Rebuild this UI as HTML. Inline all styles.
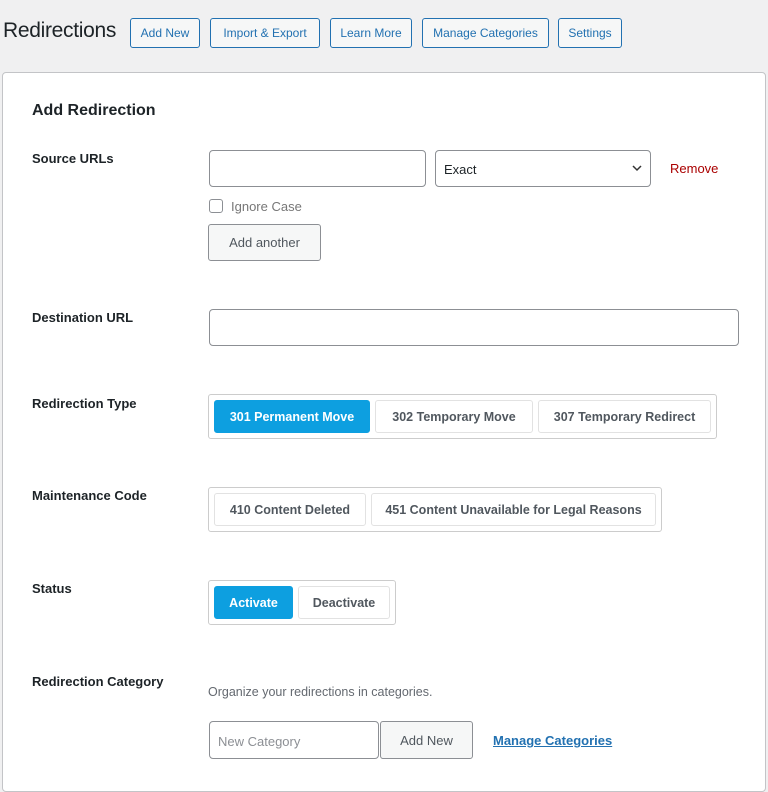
<!DOCTYPE html><html><head><style>
body{margin:0;width:768px;height:774px;background:#f0f0f1;font-family:"Liberation Sans",sans-serif;position:relative;overflow:hidden;color:#1d2327}
.a{position:absolute;box-sizing:border-box}
.hb{border:1px solid #2271b1;border-radius:3px;color:#2271b1;font-size:12px;display:flex;align-items:center;justify-content:center;background:#f6f7f7;top:18px;height:30px}
.lb{font-size:13px;font-weight:bold;left:32px}
.in{border:1px solid #8c8f94;border-radius:4px;background:#fff}
.grp{border:1px solid #ccc;border-radius:3px;background:#fff}
.bt{border:1px solid #e2e2e2;border-radius:3px;font-size:12.5px;font-weight:bold;color:#50575e;display:flex;align-items:center;justify-content:center;background:#fff}
.on{background:#0d9fe0;border-color:#0d9fe0;color:#fff}
</style></head><body>
<div class="a" style="left:3px;top:19px;font-size:21px;letter-spacing:-0.3px;color:#1d2327">Redirections</div>
<div class="a hb" style="left:130px;width:70px">Add New</div>
<div class="a hb" style="left:210px;width:110px">Import &amp; Export</div>
<div class="a hb" style="left:330px;width:82px">Learn More</div>
<div class="a hb" style="left:422px;width:127px">Manage Categories</div>
<div class="a hb" style="left:558px;width:64px">Settings</div>
<div class="a" style="left:2px;top:72px;width:764px;height:720px;background:#fff;border:1px solid #c3c4c7;border-radius:4px"></div>
<div class="a" style="left:32px;top:102px;font-size:16px;font-weight:bold">Add Redirection</div>
<div class="a lb" style="top:151px">Source URLs</div>
<div class="a in" style="left:209px;top:150px;width:217px;height:37px"></div>
<div class="a in" style="left:435px;top:150px;width:216px;height:37px;font-size:13px;padding:11px 8px">Exact
<svg style="position:absolute;right:8px;top:14px" width="10" height="7"><path d="M1 1l4 4 4-4" stroke="#333" stroke-width="1.5" fill="none"/></svg></div>
<div class="a" style="left:670px;top:161px;font-size:13px;color:#a00">Remove</div>
<div class="a" style="left:209px;top:199px;width:14px;height:14px;border:1px solid #8c8f94;border-radius:3px"></div>
<div class="a" style="left:231px;top:199px;font-size:13px;color:#777">Ignore Case</div>
<div class="a" style="left:208px;top:224px;width:113px;height:37px;border:1px solid #8c8f94;border-radius:3px;background:#f6f7f7;font-size:13px;color:#50575e;display:flex;align-items:center;justify-content:center">Add another</div>
<div class="a lb" style="top:310px">Destination URL</div>
<div class="a in" style="left:209px;top:309px;width:530px;height:37px"></div>
<div class="a lb" style="top:396px">Redirection Type</div>
<div class="a grp" style="left:208px;top:394px;width:509px;height:45px"></div>
<div class="a bt on" style="left:214px;top:400px;width:156px;height:33px">301 Permanent Move</div>
<div class="a bt" style="left:375px;top:400px;width:158px;height:33px">302 Temporary Move</div>
<div class="a bt" style="left:538px;top:400px;width:173px;height:33px">307 Temporary Redirect</div>
<div class="a lb" style="top:488px">Maintenance Code</div>
<div class="a grp" style="left:208px;top:487px;width:454px;height:45px"></div>
<div class="a bt" style="left:214px;top:493px;width:152px;height:33px">410 Content Deleted</div>
<div class="a bt" style="left:371px;top:493px;width:285px;height:33px">451 Content Unavailable for Legal Reasons</div>
<div class="a lb" style="top:581px">Status</div>
<div class="a grp" style="left:208px;top:580px;width:188px;height:45px"></div>
<div class="a bt on" style="left:214px;top:586px;width:79px;height:33px">Activate</div>
<div class="a bt" style="left:298px;top:586px;width:92px;height:33px">Deactivate</div>
<div class="a lb" style="top:674px">Redirection Category</div>
<div class="a" style="left:208px;top:685px;font-size:12.5px;color:#646970">Organize your redirections in categories.</div>
<div class="a in" style="left:209px;top:721px;width:170px;height:38px;font-size:13px;color:#8c8f94;padding:12px 8px">New Category</div>
<div class="a" style="left:380px;top:721px;width:93px;height:38px;border:1px solid #8c8f94;border-radius:3px;background:#f6f7f7;font-size:13px;color:#50575e;display:flex;align-items:center;justify-content:center">Add New</div>
<div class="a" style="left:493px;top:733px;font-size:13px;font-weight:bold;color:#2271b1;text-decoration:underline">Manage Categories</div>
</body></html>
